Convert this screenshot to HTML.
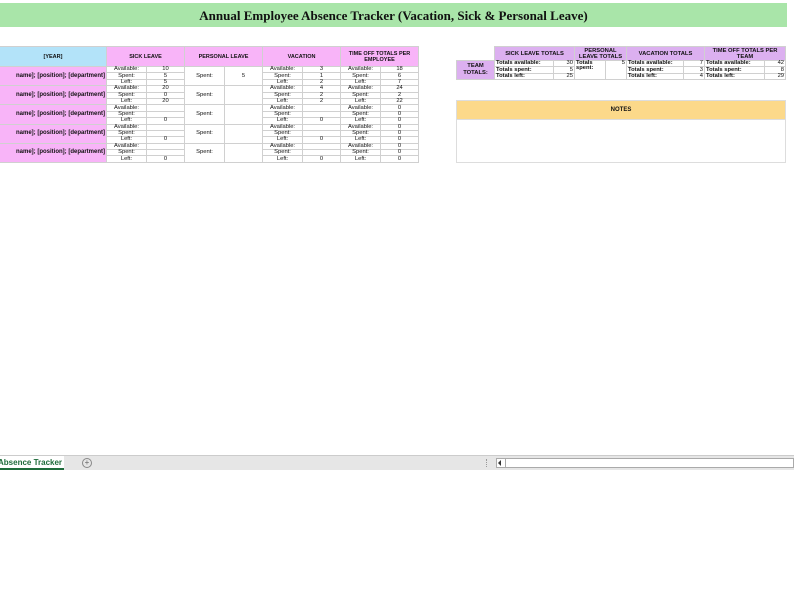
<!DOCTYPE html>
<html><head><meta charset="utf-8"><style>
*{margin:0;padding:0;box-sizing:border-box}
body{width:794px;height:596px;background:#fff;position:relative;overflow:hidden;font-family:"Liberation Sans",Arial,sans-serif;color:#111}
.title{position:absolute;left:0;top:3px;width:787px;height:24px;background:#a9e5a9;font-family:"Liberation Serif",serif;font-weight:bold;font-size:13px;line-height:25px;text-align:center;}
table{border-collapse:collapse;table-layout:fixed;position:absolute;font-size:5.8px}
td{border:1px solid #d0d0d0;padding:0 1px;line-height:5px;height:6.4px;overflow:visible;white-space:nowrap;vertical-align:middle}
.h{background:#f8b4f8;font-weight:bold;text-align:center;font-size:5.5px;height:20px;line-height:6px;white-space:normal}
.y{background:#b3e3f9}
.n{background:#f8b4f8;font-weight:bold;text-align:right;font-size:6px}
.c{text-align:center}.r{text-align:right}
.p{background:#dcb0f0;font-weight:bold;text-align:center;white-space:normal}
.notesh{position:absolute;left:456px;top:100px;width:330px;height:20px;background:#fcd98a;border:1px solid #ddd;font-size:6px;font-weight:bold;text-align:center;line-height:18px}
.notesb{position:absolute;left:456px;top:120px;width:330px;height:43px;border:1px solid #ddd;border-top:none}
.tabbar{position:absolute;left:0;top:455px;width:794px;height:15px;background:#e6e6e6;border-top:1px solid #ccc}
.tab{position:absolute;left:0;top:0;width:64px;height:14px;background:#fff;color:#1e6b3a;font-weight:bold;font-size:8px;line-height:13px;border-bottom:2px solid #1e6b3a;white-space:nowrap;overflow:hidden}
</style></head><body>
<div class="title">Annual Employee Absence Tracker (Vacation, Sick &amp; Personal Leave)</div>

<table style="left:-1px;top:46px;width:420px">
<colgroup><col style="width:107px"><col style="width:40px"><col style="width:38px"><col style="width:40px"><col style="width:38px"><col style="width:40px"><col style="width:38px"><col style="width:40px"><col style="width:38px"></colgroup>
<tr><td class="h y">[YEAR]</td><td class="h" colspan="2">SICK LEAVE</td><td class="h" colspan="2">PERSONAL LEAVE</td><td class="h" colspan="2">VACATION</td><td class="h" colspan="2">TIME OFF TOTALS PER EMPLOYEE</td></tr>

<tr><td class="n" rowspan="3">name]; [position]; [department]</td><td class="c">Available:</td><td class="c">10</td><td class="c" rowspan="3">Spent:</td><td class="c" rowspan="3">5</td><td class="c">Available:</td><td class="c">3</td><td class="c">Available:</td><td class="c">18</td></tr>
<tr><td class="c">Spent:</td><td class="c">5</td><td class="c">Spent:</td><td class="c">1</td><td class="c">Spent:</td><td class="c">6</td></tr>
<tr><td class="c">Left:</td><td class="c">5</td><td class="c">Left:</td><td class="c">2</td><td class="c">Left:</td><td class="c">7</td></tr>

<tr><td class="n" rowspan="3">name]; [position]; [department]</td><td class="c">Available:</td><td class="c">20</td><td class="c" rowspan="3">Spent:</td><td rowspan="3"></td><td class="c">Available:</td><td class="c">4</td><td class="c">Available:</td><td class="c">24</td></tr>
<tr><td class="c">Spent:</td><td class="c">0</td><td class="c">Spent:</td><td class="c">2</td><td class="c">Spent:</td><td class="c">2</td></tr>
<tr><td class="c">Left:</td><td class="c">20</td><td class="c">Left:</td><td class="c">2</td><td class="c">Left:</td><td class="c">22</td></tr>

<tr><td class="n" rowspan="3">name]; [position]; [department]</td><td class="c">Available:</td><td></td><td class="c" rowspan="3">Spent:</td><td rowspan="3"></td><td class="c">Available:</td><td></td><td class="c">Available:</td><td class="c">0</td></tr>
<tr><td class="c">Spent:</td><td></td><td class="c">Spent:</td><td></td><td class="c">Spent:</td><td class="c">0</td></tr>
<tr><td class="c">Left:</td><td class="c">0</td><td class="c">Left:</td><td class="c">0</td><td class="c">Left:</td><td class="c">0</td></tr>

<tr><td class="n" rowspan="3">name]; [position]; [department]</td><td class="c">Available:</td><td></td><td class="c" rowspan="3">Spent:</td><td rowspan="3"></td><td class="c">Available:</td><td></td><td class="c">Available:</td><td class="c">0</td></tr>
<tr><td class="c">Spent:</td><td></td><td class="c">Spent:</td><td></td><td class="c">Spent:</td><td class="c">0</td></tr>
<tr><td class="c">Left:</td><td class="c">0</td><td class="c">Left:</td><td class="c">0</td><td class="c">Left:</td><td class="c">0</td></tr>

<tr><td class="n" rowspan="3">name]; [position]; [department]</td><td class="c">Available:</td><td></td><td class="c" rowspan="3">Spent:</td><td rowspan="3"></td><td class="c">Available:</td><td></td><td class="c">Available:</td><td class="c">0</td></tr>
<tr><td class="c">Spent:</td><td></td><td class="c">Spent:</td><td></td><td class="c">Spent:</td><td class="c">0</td></tr>
<tr><td class="c">Left:</td><td class="c">0</td><td class="c">Left:</td><td class="c">0</td><td class="c">Left:</td><td class="c">0</td></tr>
</table>

<table style="left:456px;top:46px;width:329px">
<colgroup><col style="width:38px"><col style="width:59px"><col style="width:21px"><col style="width:31px"><col style="width:21px"><col style="width:57px"><col style="width:21px"><col style="width:60px"><col style="width:21px"></colgroup>
<tr><td style="border:none;height:14px"></td><td class="p" colspan="2" style="height:14px;line-height:6px">SICK LEAVE TOTALS</td><td class="p" colspan="2" style="height:14px;line-height:6px">PERSONAL LEAVE TOTALS</td><td class="p" colspan="2" style="height:14px;line-height:6px">VACATION TOTALS</td><td class="p" colspan="2" style="height:14px;line-height:6px">TIME OFF TOTALS PER TEAM</td></tr>
<tr><td class="p" rowspan="3" style="line-height:7px">TEAM TOTALS:</td><td style="font-weight:bold">Totals available:</td><td class="r">30</td><td rowspan="3" style="vertical-align:top;font-weight:bold;white-space:normal">Totals spent:</td><td rowspan="3" class="r" style="vertical-align:top">5</td><td style="font-weight:bold">Totals available:</td><td class="r">7</td><td style="font-weight:bold">Totals available:</td><td class="r">42</td></tr>
<tr><td style="font-weight:bold">Totals spent:</td><td class="r">5</td><td style="font-weight:bold">Totals spent:</td><td class="r">3</td><td style="font-weight:bold">Totals spent:</td><td class="r">8</td></tr>
<tr><td style="font-weight:bold">Totals left:</td><td class="r">25</td><td style="font-weight:bold">Totals left:</td><td class="r">4</td><td style="font-weight:bold">Totals left:</td><td class="r">29</td></tr>
</table>

<div class="notesh">NOTES</div>
<div class="notesb"></div>

<div class="tabbar">
<div class="tab"><span style="margin-left:-2px">Absence Tracker</span></div>
<div style="position:absolute;left:82px;top:2px;width:10px;height:10px;border:1px solid #888;border-radius:50%;font-size:8px;line-height:8px;text-align:center;color:#666">+</div>
<div style="position:absolute;left:486px;top:3px;width:1px;height:8px;border-left:1px dotted #999"></div>
<div style="position:absolute;left:496px;top:2px;width:298px;height:10px;background:#fff;border:1px solid #aaa"></div>
<div style="position:absolute;left:498px;top:4px;width:0;height:0;border-top:3px solid transparent;border-bottom:3px solid transparent;border-right:3px solid #333"></div>
<div style="position:absolute;left:505px;top:2px;width:1px;height:10px;background:#aaa"></div>
</div>
</body></html>
